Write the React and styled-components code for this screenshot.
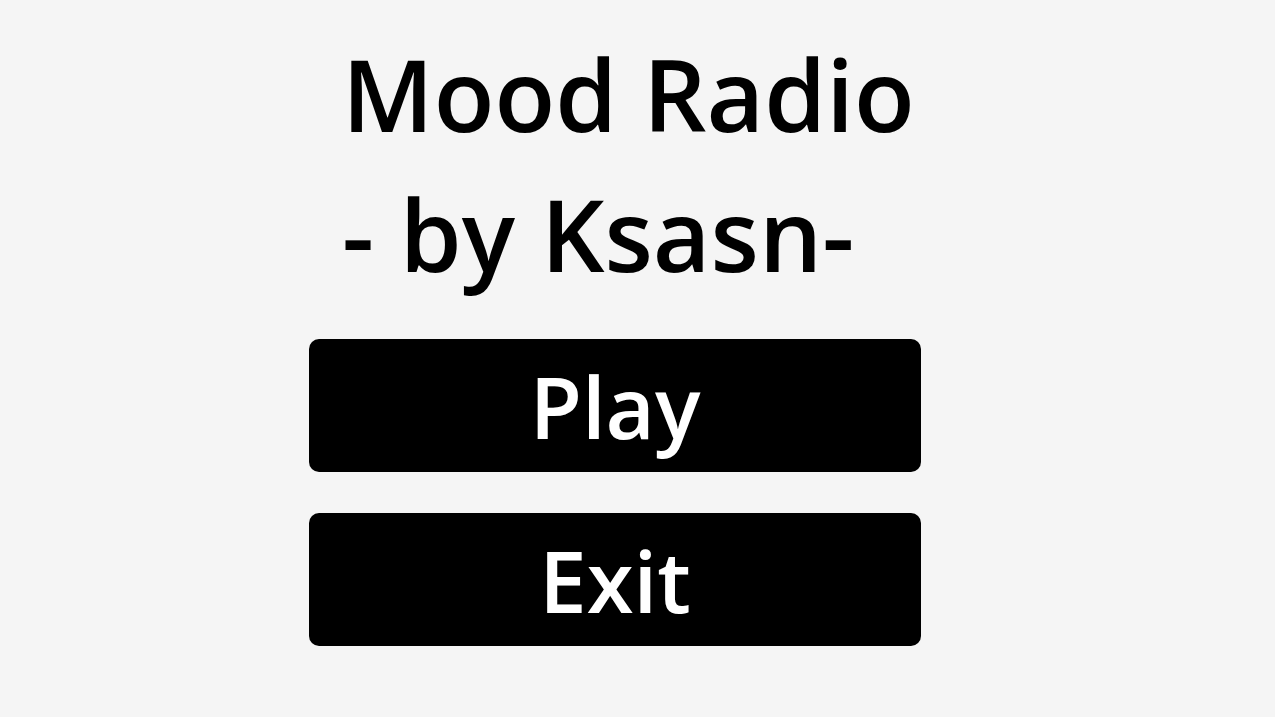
import React from "react";
import styled, { createGlobalStyle } from "styled-components";

const GlobalStyle = createGlobalStyle`
  html, body {
    margin: 0;
    padding: 0;
    background: #f5f5f5;
    font-family: "Open Sans", "Noto Sans", sans-serif;
  }
`;

const Screen = styled.div`
  width: 100%;
  min-height: 100vh;
  box-sizing: border-box;
  padding-right: 45px;
  display: flex;
  justify-content: center;
`;

const Menu = styled.div`
  width: 612px;
  display: flex;
  flex-direction: column;
  padding-top: 24px;
`;

const Title = styled.h1`
  margin: 0 0 35px;
  padding-left: 33px;
  font-size: 99.5px;
  font-weight: 600;
  line-height: 140px;
  white-space: nowrap;
  color: #000;
`;

const MenuButton = styled.button`
  height: 133px;
  margin-bottom: 41px;
  border: none;
  border-radius: 10px;
  background: #000;
  color: #fff;
  font-family: inherit;
  font-size: 85px;
  font-weight: 600;
  cursor: pointer;
`;

const App = () => {
  return (
    <>
      <GlobalStyle />
      <Screen>
        <Menu>
          <Title>
            Mood Radio
            <br />- by Ksasn-
          </Title>
          <MenuButton>Play</MenuButton>
          <MenuButton>Exit</MenuButton>
        </Menu>
      </Screen>
    </>
  );
};

export default App;
